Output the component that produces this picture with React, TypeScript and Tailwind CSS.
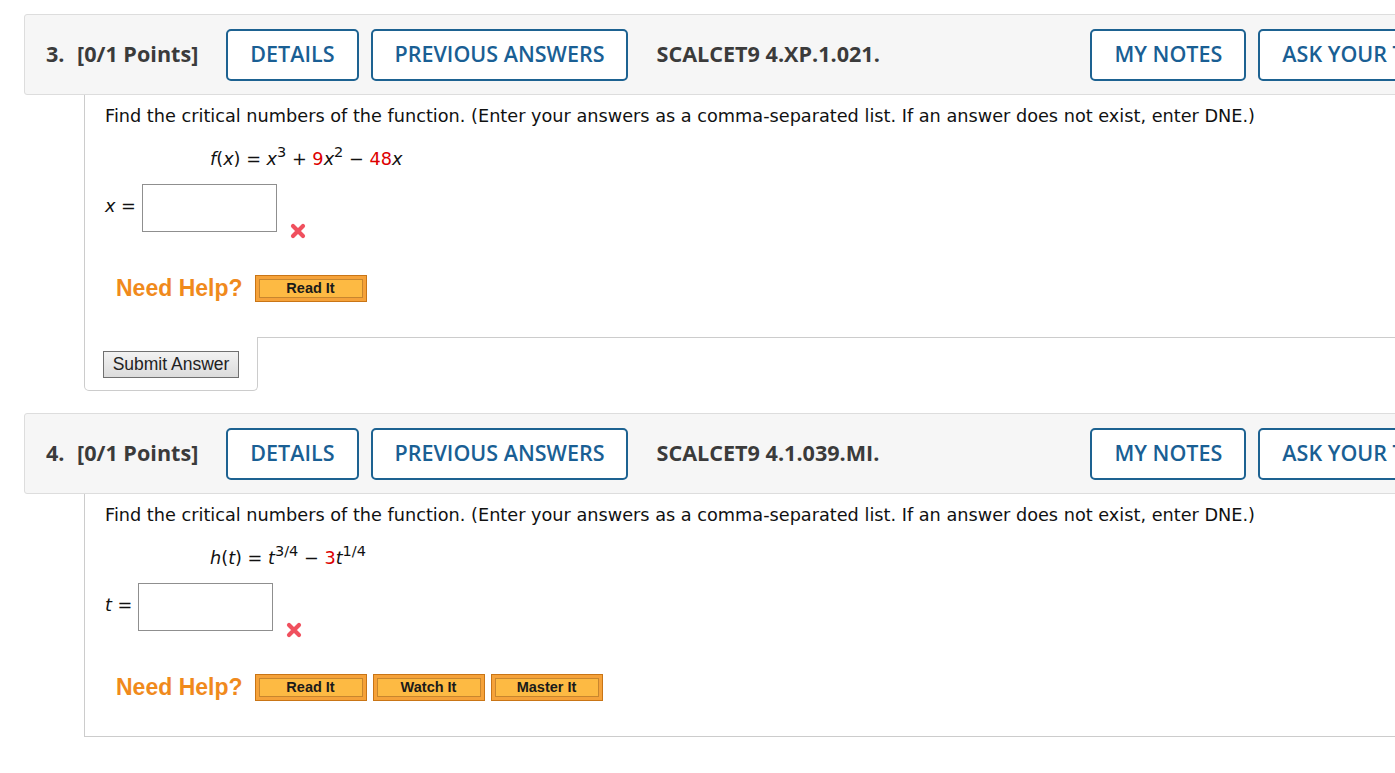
import React from "react";

const headerFont = { fontFamily: '"Open Sans", "Noto Sans", sans-serif' };
const bodyFont = { fontFamily: '"DejaVu Sans", Verdana, sans-serif' };
const arial = { fontFamily: '"Liberation Sans", Arial, sans-serif' };

function HeaderButton({ children }: { children: React.ReactNode }) {
  return (
    <div className="h-[52px] px-[22px] flex items-center border-2 border-[#1d6291] rounded-[5px] text-[#1a5f94] text-[21.5px] font-semibold bg-white whitespace-nowrap shrink-0">
      {children}
    </div>
  );
}

function Header({ num, code }: { num: string; code: string }) {
  return (
    <div
      className="w-[1494px] h-[81px] flex items-center border border-[#dddddd] rounded-[3px] bg-[#f6f6f6] pl-[21px] pr-[21px]"
      style={headerFont}
    >
      <span className="text-[21.6px] font-bold text-[#3b3b3b] w-[31px] shrink-0">{num}</span>
      <span className="text-[21.6px] font-bold text-[#3b3b3b] shrink-0 whitespace-nowrap">[0/1 Points]</span>
      <div className="flex gap-[12px] ml-[28px] shrink-0">
        <HeaderButton>DETAILS</HeaderButton>
        <HeaderButton>PREVIOUS ANSWERS</HeaderButton>
      </div>
      <span className="ml-[28px] w-[434px] shrink-0 text-[21.6px] font-bold text-[#3b3b3b] whitespace-nowrap">{code}</span>
      <div className="flex gap-[12px] shrink-0">
        <HeaderButton>MY NOTES</HeaderButton>
        <HeaderButton>ASK YOUR TEACHER</HeaderButton>
      </div>
    </div>
  );
}

function RedX() {
  return (
    <svg width="16" height="16" viewBox="0 0 16 16" className="shrink-0">
      <path d="M3 3 L13 13 M13 3 L3 13" stroke="#f0505e" strokeWidth="4.2" strokeLinecap="round" />
    </svg>
  );
}

function HelpButton({ label }: { label: string }) {
  return (
    <div className="w-[112px] h-[27px] bg-[#f5a23a] border border-[#c97516] p-[3px]">
      <div
        className="w-full h-full bg-[#fdba43] border border-[#c8862e] flex items-center justify-center text-[14.5px] leading-none font-bold text-[#1a1a1a]"
        style={arial}
      >
        {label}
      </div>
    </div>
  );
}

function NeedHelp({ buttons }: { buttons: string[] }) {
  return (
    <div className="flex items-center ml-[11px] h-[33px]">
      <span className="text-[23px] leading-[33px] font-bold text-[#f08a1c] mr-[12px]" style={arial}>
        Need Help?
      </span>
      <div className="flex gap-[6px]">
        {buttons.map((b) => (
          <HelpButton key={b} label={b} />
        ))}
      </div>
    </div>
  );
}

const prompt =
  "Find the critical numbers of the function. (Enter your answers as a comma-separated list. If an answer does not exist, enter DNE.)";

const supCls = "text-[14.5px] relative -top-[8px]";

function QuestionBody({
  formula,
  variable,
  labelWidth,
  buttons,
  bordered,
}: {
  formula: React.ReactNode;
  variable: string;
  labelWidth: string;
  buttons: string[];
  bordered: boolean;
}) {
  return (
    <div
      className={
        bordered
          ? "ml-[60px] border-l border-b border-[#cccccc]"
          : "ml-[60px] border-l border-[#cccccc]"
      }
      style={bodyFont}
    >
      <div className="pl-[20px] pt-[11px] pb-[32px]">
        <p className="text-[17.7px] text-[#111] leading-[21px] whitespace-nowrap">{prompt}</p>
        <div className="ml-[105px] mt-[22px] text-[17.7px] text-[#111] leading-[21px] whitespace-nowrap">
          {formula}
        </div>
        <div className="flex items-start mt-[14px] h-[55px]">
          <span className={`text-[17.7px] leading-[21px] text-[#111] mt-[12px] ${labelWidth}`}>
            <i>{variable}</i> =
          </span>
          <div className="w-[135px] h-[48px] border border-[#8f8f8f] bg-white" />
          <div className="ml-[13px] mt-[39px]">
            <RedX />
          </div>
        </div>
        <div className="mt-[33px]">
          <NeedHelp buttons={buttons} />
        </div>
      </div>
    </div>
  );
}

export default function App() {
  return (
    <div className="w-[1395px] h-[773px] overflow-hidden bg-white">
      <div className="pl-[24px] pt-[14px]">
        {/* Question 3 */}
        <Header num="3." code="SCALCET9 4.XP.1.021." />
        <QuestionBody
          variable="x"
          labelWidth="w-[37px]"
          buttons={["Read It"]}
          bordered={false}
          formula={
            <>
              <i>f</i>(<i>x</i>) = <i>x</i>
              <sup className={supCls}>3</sup> + <span className="text-[#dd0000]">9</span>
              <i>x</i>
              <sup className={supCls}>2</sup> − <span className="text-[#dd0000]">48</span>
              <i>x</i>
            </>
          }
        />
        <div className="flex ml-[60px]">
          <div className="w-[174px] h-[54px] border-l border-r border-b border-[#cccccc] rounded-b-[5px] pl-[18px] pt-[14px]">
            <div
              className="w-[136px] h-[27px] border border-[#707070] bg-gradient-to-b from-[#f2f2f2] to-[#dcdcdc] text-[17.5px] leading-none text-[#222] flex items-center justify-center"
              style={arial}
            >
              Submit Answer
            </div>
          </div>
          <div className="flex-1 border-t border-[#cccccc]" />
        </div>

        {/* Question 4 */}
        <div className="mt-[22px]">
          <Header num="4." code="SCALCET9 4.1.039.MI." />
        </div>
        <QuestionBody
          variable="t"
          labelWidth="w-[33px]"
          buttons={["Read It", "Watch It", "Master It"]}
          bordered={true}
          formula={
            <>
              <i>h</i>(<i>t</i>) = <i>t</i>
              <sup className={supCls}>3/4</sup> − <span className="text-[#dd0000]">3</span>
              <i>t</i>
              <sup className={supCls}>1/4</sup>
            </>
          }
        />
      </div>
    </div>
  );
}
